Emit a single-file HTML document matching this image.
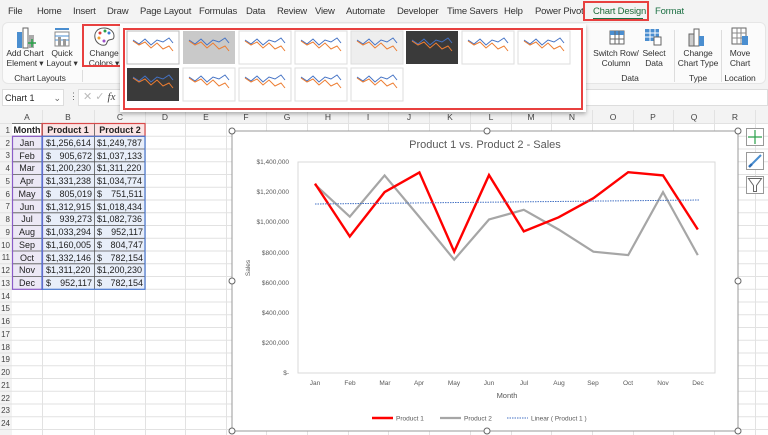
<!DOCTYPE html>
<html><head><meta charset="utf-8"><style>
*{margin:0;padding:0;box-sizing:border-box}
body{width:768px;height:435px;overflow:hidden;background:#fff;font-family:"Liberation Sans",Arial,sans-serif;position:relative;color:#262626}
.abs{position:absolute}
.tab{position:absolute;top:6px;font-size:9.5px;color:#333;letter-spacing:-0.2px;white-space:nowrap}
.rl{position:absolute;font-size:8.5px;text-align:center;line-height:10px;color:#333;white-space:nowrap;letter-spacing:-0.1px}
</style></head><body>
<div class="abs" style="left:0;top:0;width:768px;height:110px;background:#f3f3f3"></div>
<div class="tab" style="left:8px">File</div>
<div class="tab" style="left:37px">Home</div>
<div class="tab" style="left:73px">Insert</div>
<div class="tab" style="left:107px">Draw</div>
<div class="tab" style="left:140px">Page Layout</div>
<div class="tab" style="left:199px">Formulas</div>
<div class="tab" style="left:246px">Data</div>
<div class="tab" style="left:277px">Review</div>
<div class="tab" style="left:315px">View</div>
<div class="tab" style="left:346px">Automate</div>
<div class="tab" style="left:397px">Developer</div>
<div class="tab" style="left:447px">Time Savers</div>
<div class="tab" style="left:504px">Help</div>
<div class="tab" style="left:535px">Power Pivot</div>
<div class="tab" style="left:593px;color:#1e6b3a">Chart Design</div>
<div class="abs" style="left:593px;top:18px;width:50px;height:2px;background:#1e7145"></div>
<div class="abs" style="left:583px;top:1px;width:66px;height:20px;border:2px solid #e8403f"></div>
<div class="tab" style="left:655px;color:#1e7145">Format</div>
<div class="abs" style="left:2px;top:22px;width:764px;height:62px;background:#fbfbfb;border-radius:6px;border:1px solid #e6e6e6"></div>
<svg class="abs" style="left:15px;top:26px" width="22" height="24"><rect x="2" y="6" width="5" height="16" fill="#4a8ed0"/><rect x="8" y="2" width="5" height="20" fill="#fff" stroke="#666"/><rect x="14" y="9" width="5" height="13" fill="#aaa"/><path d="M13 17h8M17 13v8" stroke="#2aa14a" stroke-width="1.5"/></svg>
<div class="rl" style="left:4px;top:48px;width:42px">Add Chart<br>Element ▾</div>
<svg class="abs" style="left:52px;top:26px" width="20" height="22"><rect x="3" y="2" width="14" height="2" fill="#4a8ed0"/><rect x="3" y="6" width="14" height="14" fill="#fff" stroke="#888"/><path d="M3 10h14M3 14h14" stroke="#4a8ed0"/><rect x="6" y="11" width="3" height="9" fill="#999"/><rect x="11" y="13" width="3" height="7" fill="#999"/></svg>
<div class="rl" style="left:44px;top:48px;width:36px">Quick<br>Layout ▾</div>
<svg class="abs" style="left:93px;top:27px" width="22" height="20"><path d="M11 1C4 1 1 6 2 11c1 5 6 8 10 7 3-1 1-4 4-5 3-1 5 0 5-4C21 4 16 1 11 1z" fill="#fff" stroke="#555"/><circle cx="7" cy="6" r="1.5" fill="#e03c3c"/><circle cx="12" cy="4" r="1.5" fill="#2aa14a"/><circle cx="16" cy="6" r="1.5" fill="#3b7dd8"/><circle cx="6" cy="11" r="1.5" fill="#f0a030"/><circle cx="11" cy="14" r="1.5" fill="#9b4fc8"/></svg>
<div class="rl" style="left:86px;top:48px;width:36px">Change<br>Colors ▾</div>
<div class="abs" style="left:82px;top:24px;width:40px;height:43px;border:2px solid #e8403f"></div>
<div class="rl" style="left:10px;top:73px;width:60px">Chart Layouts</div>
<div class="abs" style="left:82px;top:70px;width:1px;height:12px;background:#ddd"></div>
<svg class="abs" style="left:606px;top:26px" width="20" height="20"><rect x="4" y="5" width="14" height="13" fill="#fff" stroke="#666"/><rect x="4" y="5" width="14" height="4" fill="#4a8ed0"/><path d="M4 13h14M9 5v13M13 5v13" stroke="#666"/></svg>
<div class="rl" style="left:592px;top:48px;width:48px">Switch Row/<br>Column</div>
<svg class="abs" style="left:643px;top:27px" width="20" height="20"><rect x="2" y="2" width="14" height="12" fill="#4a8ed0"/><path d="M2 6h14M2 10h14M7 2v12M12 2v12" stroke="#fff"/><rect x="11" y="10" width="7" height="8" fill="#fff" stroke="#666"/></svg>
<div class="rl" style="left:640px;top:48px;width:28px">Select<br>Data</div>
<div class="abs" style="left:674px;top:30px;width:1px;height:52px;background:#ddd"></div>
<svg class="abs" style="left:686px;top:26px" width="20" height="22"><rect x="3" y="8" width="5" height="12" fill="#ccc" stroke="#666"/><rect x="8" y="3" width="5" height="17" fill="#fff" stroke="#666"/><rect x="13" y="10" width="5" height="10" fill="#4a8ed0"/></svg>
<div class="rl" style="left:673px;top:48px;width:50px">Change<br>Chart Type</div>
<div class="abs" style="left:721px;top:30px;width:1px;height:52px;background:#ddd"></div>
<svg class="abs" style="left:730px;top:26px" width="20" height="22"><rect x="2" y="2" width="14" height="16" fill="#fff" stroke="#666"/><path d="M2 7h14M2 12h14M7 2v16M11 2v16" stroke="#888"/><rect x="12" y="10" width="6" height="9" fill="#4a8ed0"/></svg>
<div class="rl" style="left:726px;top:48px;width:28px">Move<br>Chart</div>
<div class="rl" style="left:612px;top:73px;width:36px">Data</div>
<div class="rl" style="left:680px;top:73px;width:36px">Type</div>
<div class="rl" style="left:722px;top:73px;width:36px">Location</div>
<div class="abs" style="left:0;top:86px;width:768px;height:24px;background:#f3f3f3"></div>
<div class="abs" style="left:2px;top:89px;width:62px;height:17px;background:#fff;border:1px solid #ddd;font-size:9px;padding:3px 2px">Chart 1 <span style="float:right;color:#666">⌄</span></div>
<div class="abs" style="left:69px;top:91px;font-size:9px;color:#666">⋮</div>
<div class="abs" style="left:78px;top:89px;width:690px;height:17px;background:#fff;border:1px solid #ddd"></div>
<div class="abs" style="left:83px;top:90px;font-size:11px;color:#bbb">✕ ✓ <i style="color:#444;font-family:'Liberation Serif',serif">fx</i></div>
<svg class="abs" style="left:0;top:110px" width="768" height="325" font-family="Liberation Sans, Arial, sans-serif">
<rect x="0" y="0" width="768" height="13" fill="#f3f3f3"/>
<rect x="0" y="0" width="12" height="325" fill="#f3f3f3"/>
<g stroke="#e2e2e2" stroke-width="1">
<path d="M42.5 0v325M94.5 0v325M145.5 0v325M185.5 0v325M226.5 0v325M266.5 0v325M307.5 0v325M348.5 0v325M388.5 0v325M429.5 0v325M470.5 0v325M511.5 0v325M551.5 0v325M592.5 0v325M633.5 0v325M673.5 0v325M714.5 0v325M755.5 0v325"/>
<path d="M0 13.5h768M0 26.3h768M0 39h768M0 51.8h768M0 64.5h768M0 77.3h768M0 90h768M0 102.8h768M0 115.5h768M0 128.3h768M0 141h768M0 153.8h768M0 166.5h768M0 179.3h768M0 192h768M0 204.8h768M0 217.5h768M0 230.3h768M0 243h768M0 255.8h768M0 268.5h768M0 281.3h768M0 294h768M0 306.8h768M0 319.5h768"/>
</g>
<g font-size="8.5" fill="#444" text-anchor="middle">
<text x="27" y="10">A</text><text x="68" y="10">B</text><text x="120" y="10">C</text><text x="165" y="10">D</text><text x="206" y="10">E</text><text x="246" y="10">F</text><text x="287" y="10">G</text><text x="328" y="10">H</text><text x="368" y="10">I</text><text x="409" y="10">J</text><text x="450" y="10">K</text><text x="491" y="10">L</text><text x="531" y="10">M</text><text x="572" y="10">N</text><text x="613" y="10">O</text><text x="653" y="10">P</text><text x="694" y="10">Q</text><text x="735" y="10">R</text>
</g>
<g font-size="8" fill="#444" text-anchor="end">
<text x="10" y="23">1</text><text x="10" y="36">2</text><text x="10" y="48">3</text><text x="10" y="61">4</text><text x="10" y="74">5</text><text x="10" y="87">6</text><text x="10" y="99">7</text><text x="10" y="112">8</text><text x="10" y="125">9</text><text x="10" y="138">10</text><text x="10" y="150">11</text><text x="10" y="163">12</text><text x="10" y="176">13</text><text x="10" y="189">14</text><text x="10" y="201">15</text><text x="10" y="214">16</text><text x="10" y="227">17</text><text x="10" y="240">18</text><text x="10" y="252">19</text><text x="10" y="265">20</text><text x="10" y="278">21</text><text x="10" y="291">22</text><text x="10" y="303">23</text><text x="10" y="316">24</text>
</g>
<rect x="42" y="26.3" width="103" height="153" fill="#e8eef9"/>
<rect x="12" y="26.3" width="30" height="153" fill="#ece8f5"/>
<rect x="42" y="13.5" width="103" height="12.8" fill="#fbe5e5"/>
<g stroke="#555" stroke-width="0.8" fill="none">
<path d="M12 13.5h133M12 26.3h133M12 39h133M12 51.8h133M12 64.5h133M12 77.3h133M12 90h133M12 102.8h133M12 115.5h133M12 128.3h133M12 141h133M12 153.8h133M12 166.5h133"/>
<path d="M42.5 13.5v166M94.5 13.5v166"/>
</g>
<rect x="42" y="13.5" width="103" height="12.8" fill="none" stroke="#d94a4a" stroke-width="1.2"/>
<rect x="12.5" y="26.3" width="30" height="153" fill="none" stroke="#8a5cc8" stroke-width="1.2"/>
<rect x="42" y="26.3" width="103" height="153" fill="none" stroke="#4a78d0" stroke-width="1.2"/>
<g font-size="9" fill="#222">
<g font-weight="bold" text-anchor="middle"><text x="27" y="23">Month</text><text x="68" y="23">Product 1</text><text x="120" y="23">Product 2</text></g>
<g text-anchor="middle"><text x="27" y="36">Jan</text><text x="27" y="49">Feb</text><text x="27" y="61">Mar</text><text x="27" y="74">Apr</text><text x="27" y="87">May</text><text x="27" y="100">Jun</text><text x="27" y="112">Jul</text><text x="27" y="125">Aug</text><text x="27" y="138">Sep</text><text x="27" y="151">Oct</text><text x="27" y="163">Nov</text><text x="27" y="176">Dec</text></g>
<g><text x="46" y="36">$1,256,614</text><text x="46" y="49">$</text><text x="92" y="49" text-anchor="end">905,672</text><text x="46" y="61">$1,200,230</text><text x="46" y="74">$1,331,238</text><text x="46" y="87">$</text><text x="92" y="87" text-anchor="end">805,019</text><text x="46" y="100">$1,312,915</text><text x="46" y="112">$</text><text x="92" y="112" text-anchor="end">939,273</text><text x="46" y="125">$1,033,294</text><text x="46" y="138">$1,160,005</text><text x="46" y="151">$1,332,146</text><text x="46" y="163">$1,311,220</text><text x="46" y="176">$</text><text x="92" y="176" text-anchor="end">952,117</text></g>
<g><text x="97" y="36">$1,249,787</text><text x="97" y="49">$1,037,133</text><text x="97" y="61">$1,311,220</text><text x="97" y="74">$1,034,774</text><text x="97" y="87">$</text><text x="143" y="87" text-anchor="end">751,511</text><text x="97" y="100">$1,018,434</text><text x="97" y="112">$1,082,736</text><text x="97" y="125">$</text><text x="143" y="125" text-anchor="end">952,117</text><text x="97" y="138">$</text><text x="143" y="138" text-anchor="end">804,747</text><text x="97" y="151">$</text><text x="143" y="151" text-anchor="end">782,154</text><text x="97" y="163">$1,200,230</text><text x="97" y="176">$</text><text x="143" y="176" text-anchor="end">782,154</text></g>
</g>
<g transform="translate(0,-110)">
<rect x="232" y="131" width="506" height="300" fill="#fff" stroke="#999" stroke-width="1"/>
<text x="485" y="148" font-size="11" fill="#595959" text-anchor="middle">Product 1 vs. Product 2 - Sales</text>
<rect x="298" y="162" width="417" height="211" fill="none" stroke="#d9d9d9"/>
<g font-size="6.5" fill="#595959" text-anchor="end">
<text x="289" y="164">$1,400,000</text><text x="289" y="194">$1,200,000</text><text x="289" y="224">$1,000,000</text><text x="289" y="255">$800,000</text><text x="289" y="285">$600,000</text><text x="289" y="315">$400,000</text><text x="289" y="345">$200,000</text><text x="289" y="375">$-</text>
</g>
<text transform="translate(250,268) rotate(-90)" font-size="6.5" fill="#595959" text-anchor="middle">Sales</text>
<g font-size="6.5" fill="#595959" text-anchor="middle">
<text x="315" y="385">Jan</text><text x="350" y="385">Feb</text><text x="385" y="385">Mar</text><text x="419" y="385">Apr</text><text x="454" y="385">May</text><text x="489" y="385">Jun</text><text x="524" y="385">Jul</text><text x="559" y="385">Aug</text><text x="593" y="385">Sep</text><text x="628" y="385">Oct</text><text x="663" y="385">Nov</text><text x="698" y="385">Dec</text>
</g>
<text x="507" y="398" font-size="7.5" fill="#595959" text-anchor="middle">Month</text>
<polyline fill="none" stroke="#a6a6a6" stroke-width="2.2" points="315,184.6 349.8,216.7 384.6,175.4 419.4,217 454.2,259.7 489,219.5 523.8,209.8 558.6,229.5 593.4,251.7 628.2,255.1 663,192.1 697.8,255.1"/>
<polyline fill="none" stroke="#ff0000" stroke-width="2.4" points="315,183.6 349.8,236.5 384.6,192.1 419.4,172.4 454.2,251.7 489,175.1 523.8,231.4 558.6,217.3 593.4,198.2 628.2,172.2 663,175.4 697.8,229.5"/>
<line x1="315" y1="204" x2="699" y2="200" stroke="#4472c4" stroke-width="1" stroke-dasharray="1.5,1"/>
<line x1="372" y1="418" x2="393" y2="418" stroke="#ff0000" stroke-width="2.4"/>
<text x="396" y="420.5" font-size="6.5" fill="#595959">Product 1</text>
<line x1="440" y1="418" x2="461" y2="418" stroke="#a6a6a6" stroke-width="2.2"/>
<text x="464" y="420.5" font-size="6.5" fill="#595959">Product 2</text>
<line x1="507" y1="418" x2="528" y2="418" stroke="#4472c4" stroke-width="1" stroke-dasharray="1.5,1"/>
<text x="531" y="420.5" font-size="6.5" fill="#595959">Linear ( Product 1 )</text>
<g fill="#fff" stroke="#666" stroke-width="1">
<circle cx="232" cy="131" r="3"/><circle cx="487" cy="131" r="3"/><circle cx="738" cy="131" r="3"/><circle cx="232" cy="281" r="3"/><circle cx="738" cy="281" r="3"/><circle cx="232" cy="431" r="3"/><circle cx="487" cy="431" r="3"/><circle cx="738" cy="431" r="3"/>
</g>
<g fill="#fff" stroke="#999">
<rect x="746.5" y="128.5" width="17" height="17"/><rect x="746.5" y="152.5" width="17" height="17"/><rect x="746.5" y="176.5" width="17" height="17"/>
</g>
<path d="M755 130v14M748 137h14" stroke="#2aa14a" stroke-width="1.2"/>
<path d="M761 155l-9 9" stroke="#4a8ed0" stroke-width="2"/><path d="M749 167l3-3" stroke="#2d6db5" stroke-width="2.5"/>
<path d="M748.5 178.5h13l-5 7v6h-3v-6z" fill="none" stroke="#666"/>
</g>
</svg>
<div class="abs" style="left:120px;top:24px;width:466px;height:88px;background:#fff;box-shadow:0 2px 4px rgba(0,0,0,.3)"></div>
<div class="abs" style="left:123px;top:28px;width:460px;height:82px;border:2px solid #e8403f"></div>
<svg class="abs" style="left:120px;top:24px" width="466" height="88">
<defs>
<g id="tl"><polyline fill="none" stroke="#4472c4" stroke-width="1" points="6,9 12,13 18,8 24,14 30,9 36,11 42,7 46,12"/><polyline fill="none" stroke="#ed7d31" stroke-width="1" points="6,10 12,14 18,11 24,17 30,12 36,18 42,15 46,20"/></g>
</defs>
<g>
<rect x="7" y="7" width="52" height="33" fill="#fff" stroke="#bbb"/><use href="#tl" x="7" y="7"/>
<rect x="63" y="7" width="52" height="33" fill="#c9c9c9"/><use href="#tl" x="63" y="7"/>
<rect x="119" y="7" width="52" height="33" fill="#fff" stroke="#ddd"/><use href="#tl" x="119" y="7"/>
<rect x="175" y="7" width="52" height="33" fill="#fff" stroke="#ddd"/><use href="#tl" x="175" y="7"/>
<rect x="231" y="7" width="52" height="33" fill="#eee" stroke="#ddd"/><use href="#tl" x="231" y="7"/>
<rect x="286" y="7" width="52" height="33" fill="#3a3a3a"/><use href="#tl" x="286" y="7"/>
<rect x="342" y="7" width="52" height="33" fill="#fff" stroke="#ddd"/><use href="#tl" x="342" y="7"/>
<rect x="398" y="7" width="52" height="33" fill="#fff" stroke="#ddd"/><use href="#tl" x="398" y="7"/>
<rect x="7" y="44" width="52" height="33" fill="#3a3a3a"/><use href="#tl" x="7" y="44"/>
<rect x="63" y="44" width="52" height="33" fill="#fff" stroke="#ddd"/><use href="#tl" x="63" y="44"/>
<rect x="119" y="44" width="52" height="33" fill="#fff" stroke="#ddd"/><use href="#tl" x="119" y="44"/>
<rect x="175" y="44" width="52" height="33" fill="#fff" stroke="#ddd"/><use href="#tl" x="175" y="44"/>
<rect x="231" y="44" width="52" height="33" fill="#fff" stroke="#ddd"/><use href="#tl" x="231" y="44"/>
</g>
</svg>
</body></html>
